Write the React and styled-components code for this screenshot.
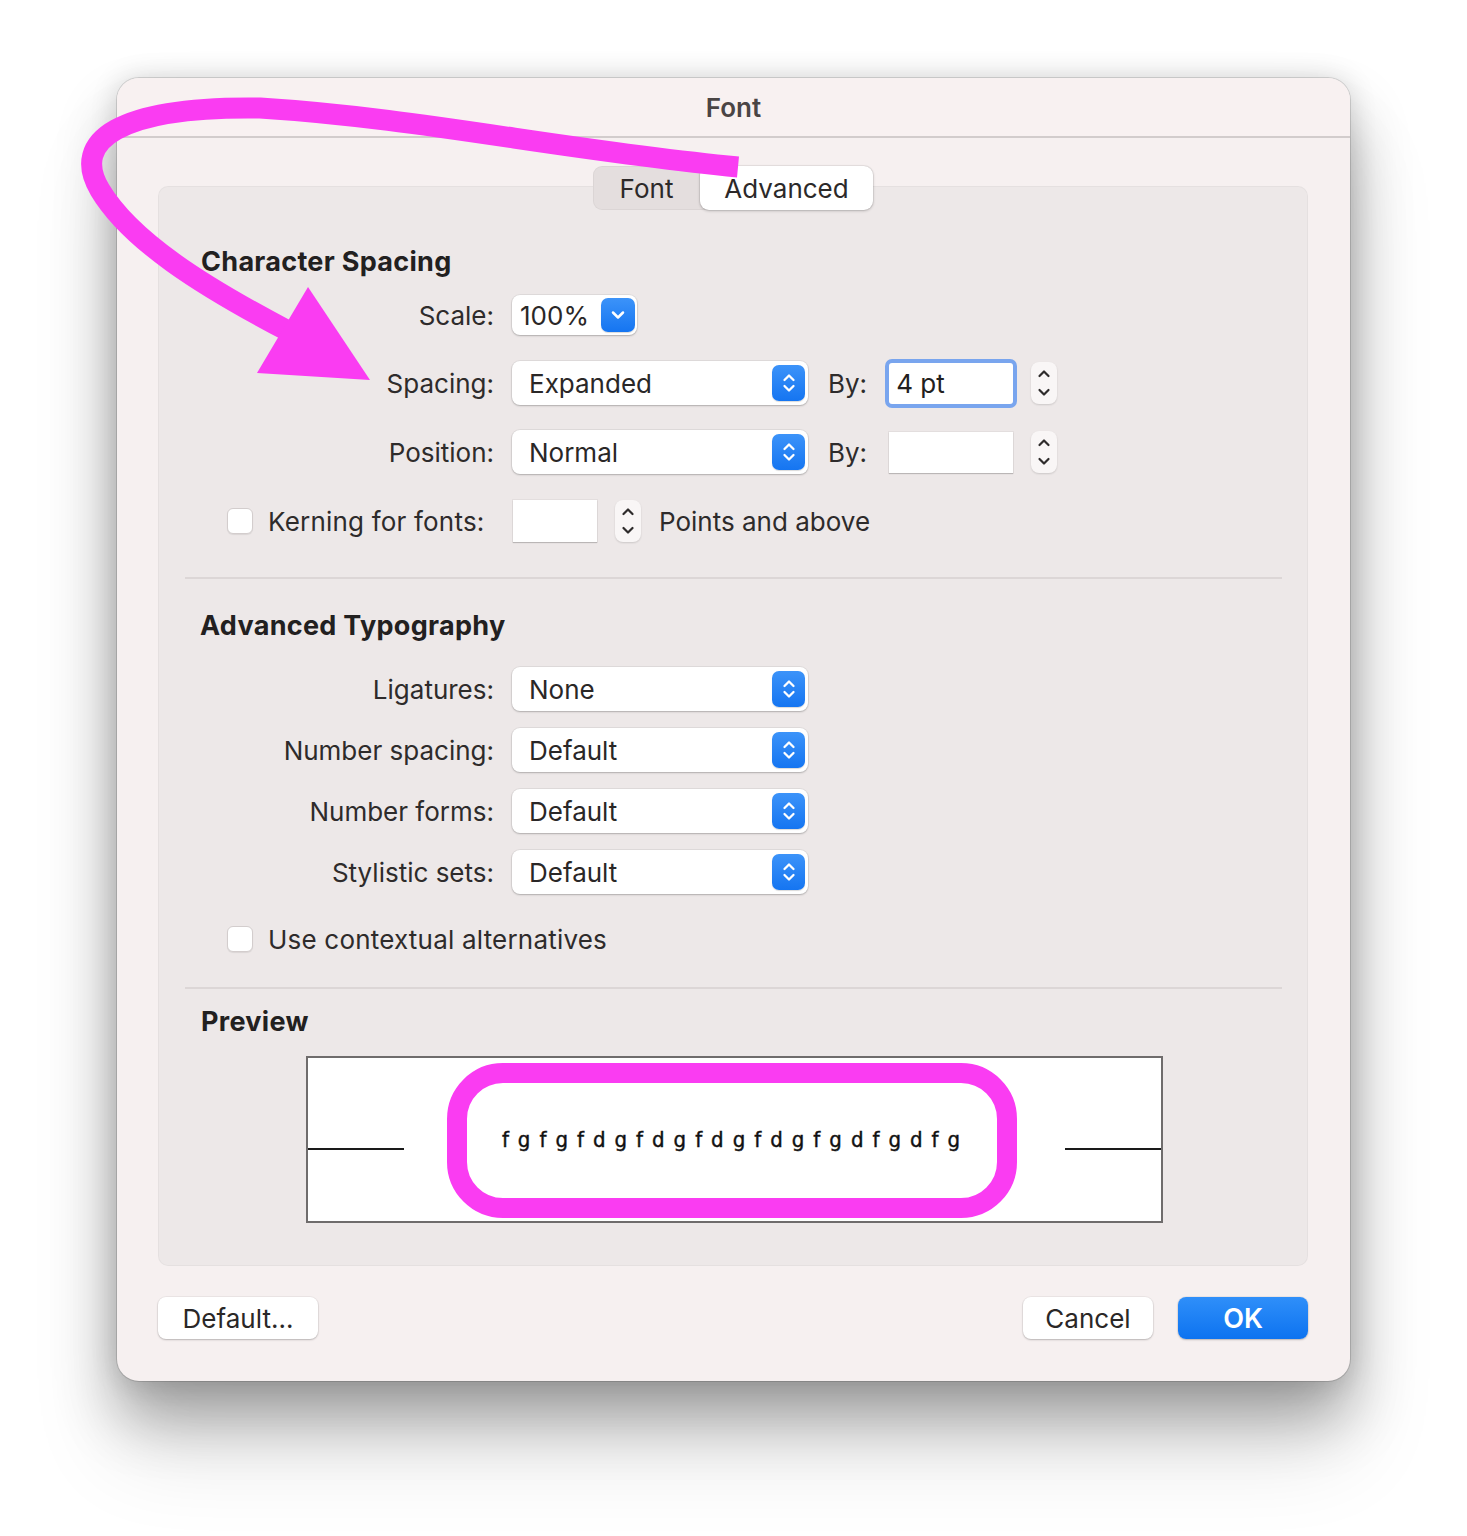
import styled, { createGlobalStyle } from "styled-components";

const MAGENTA = "#fa3cf2";

const GlobalStyle = createGlobalStyle`
  html, body {
    margin: 0;
    padding: 0;
    background: #ffffff;
  }
  body {
    font-family: Inter, "Liberation Sans", Arial, sans-serif;
    color: #2c2929;
  }
`;

const Page = styled.div`
  position: relative;
  width: 1467px;
  height: 1536px;
  box-sizing: border-box;
  padding: 78px 0 0 117px;
  background: #ffffff;
`;

const Window = styled.div`
  width: 1233px;
  height: 1303px;
  box-sizing: border-box;
  display: flex;
  flex-direction: column;
  border-radius: 22px;
  background: #f6f0f0;
  box-shadow: 0 0 0 1px rgba(0, 0, 0, 0.13), 0 0 28px rgba(0, 0, 0, 0.14),
    0 36px 60px rgba(0, 0, 0, 0.3), 0 70px 90px rgba(0, 0, 0, 0.12);
  overflow: hidden;
`;

const TitleBar = styled.div`
  flex: none;
  height: 60px;
  box-sizing: border-box;
  display: flex;
  align-items: center;
  justify-content: center;
  background: #f8f1f1;
  border-bottom: 2px solid #d2cccc;
  font-size: 26px;
  font-weight: 600;
  color: #4a4545;
`;

const Body = styled.div`
  flex: 1;
  display: flex;
  flex-direction: column;
  padding: 28px 42px 0 41px;
`;

const Tabs = styled.div`
  position: relative;
  z-index: 1;
  align-self: center;
  display: flex;
  height: 44px;
  border-radius: 9px;
  background: #e4dede;
  box-shadow: inset 0 0 0 1px rgba(0, 0, 0, 0.04);
`;

const Tab = styled.div`
  width: ${(p) => p.$w}px;
  display: flex;
  align-items: center;
  justify-content: center;
  font-size: 26px;
  color: #2c2929;
  border-radius: 9px;
  background: ${(p) => (p.$active ? "#ffffff" : "transparent")};
  box-shadow: ${(p) =>
    p.$active ? "0 1px 3px rgba(0,0,0,0.22), 0 0 0 1px rgba(0,0,0,0.05)" : "none"};
`;

const Panel = styled.div`
  margin-top: -24px;
  height: 1080px;
  box-sizing: border-box;
  display: flex;
  flex-direction: column;
  border-radius: 10px;
  background: #ede8e8;
  box-shadow: inset 0 0 0 1px rgba(0, 0, 0, 0.03);
`;

const Heading = styled.div`
  margin: ${(p) => p.$mt}px 0 0 ${(p) => p.$ml || 43}px;
  height: 30px;
  line-height: 30px;
  font-size: 27px;
  letter-spacing: 0.3px;
  font-weight: 700;
  color: #222020;
`;

const Row = styled.div`
  display: flex;
  align-items: center;
  height: ${(p) => p.$h || 48}px;
  margin-top: ${(p) => p.$mt}px;
`;

const Label = styled.div`
  width: 336px;
  flex: none;
  box-sizing: border-box;
  text-align: right;
  font-size: 26px;
  color: #2e2b2b;
  margin-right: 18px;
`;

const CheckCell = styled.div`
  width: ${(p) => (p.$auto ? "auto" : "336px")};
  flex: none;
  display: flex;
  align-items: center;
  gap: 15px;
  padding-left: 69px;
  box-sizing: border-box;
  font-size: 26px;
  letter-spacing: 0.2px;
  color: #2e2b2b;
`;

const Checkbox = styled.span`
  width: 26px;
  height: 26px;
  flex: none;
  box-sizing: border-box;
  border-radius: 6px;
  background: #ffffff;
  border: 1px solid #d3cdcd;
  box-shadow: 0 1px 1px rgba(0, 0, 0, 0.08);
`;

const Popup = styled.div`
  width: ${(p) => p.$w || 296}px;
  height: ${(p) => p.$h || 44}px;
  box-sizing: border-box;
  flex: none;
  display: flex;
  align-items: center;
  justify-content: space-between;
  padding: 0 ${(p) => p.$pr || 3}px 0 ${(p) => p.$pl || 17}px;
  background: #ffffff;
  border-radius: 8px;
  box-shadow: 0 1px 2px rgba(0, 0, 0, 0.22), 0 0 0 1px rgba(0, 0, 0, 0.05);
  font-size: 26px;
  color: #2a2727;
`;

const BlueKnob = styled.span`
  width: ${(p) => p.$w || 33}px;
  height: ${(p) => p.$h || 36}px;
  flex: none;
  display: flex;
  align-items: center;
  justify-content: center;
  border-radius: 7px;
  background: linear-gradient(#3c93f9, #1575f1);
  box-shadow: 0 1px 1px rgba(0, 0, 0, 0.15);
`;

const ByLabel = styled.span`
  margin-left: 20px;
  font-size: 26px;
  color: #2e2b2b;
`;

const TextField = styled.div`
  width: ${(p) => p.$w || 124}px;
  height: ${(p) => p.$h || 41}px;
  margin-left: ${(p) => p.$ml || 22}px;
  flex: none;
  box-sizing: border-box;
  display: flex;
  align-items: center;
  padding-left: 7px;
  background: #ffffff;
  font-size: 26px;
  color: #222020;
  border-radius: ${(p) => (p.$focus ? "3px" : "0")};
  box-shadow: ${(p) =>
    p.$focus
      ? "0 0 0 4px #79a5ee"
      : "0 1px 1px rgba(0,0,0,0.18), 0 0 0 1px rgba(0,0,0,0.04)"};
`;

const StepperBox = styled.span`
  width: 26px;
  height: 42px;
  margin-left: 18px;
  flex: none;
  display: flex;
  border-radius: 8px;
  background: #f9f6f6;
  box-shadow: 0 1px 2px rgba(0, 0, 0, 0.14);
`;

const Note = styled.span`
  margin-left: 18px;
  font-size: 26px;
  color: #2e2b2b;
`;

const Separator = styled.div`
  height: 2px;
  margin: ${(p) => p.$mt}px 26px 0 27px;
  background: #dcd6d6;
`;

const PreviewBox = styled.div`
  margin: 19px 0 0 148px;
  width: 857px;
  height: 167px;
  box-sizing: border-box;
  display: flex;
  align-items: center;
  justify-content: space-between;
  background: #ffffff;
  border: 2px solid #6f6c6c;
`;

const BaseLine = styled.span`
  width: 96px;
  height: 2px;
  margin-top: 18px;
  background: #1a1a1a;
`;

const Sample = styled.span`
  font-family: "DejaVu Sans Condensed", "DejaVu Sans", sans-serif;
  font-stretch: condensed;
  font-weight: 400;
  font-size: 22px;
  letter-spacing: 9px;
  color: #111111;
  margin-left: 2px;
  -webkit-text-stroke: 0.4px #111111;
`;

const Footer = styled.div`
  margin-top: 31px;
  display: flex;
  align-items: center;
  gap: 25px;
`;

const Button = styled.div`
  width: ${(p) => p.$w}px;
  height: 42px;
  box-sizing: border-box;
  display: flex;
  align-items: center;
  justify-content: center;
  border-radius: 8px;
  font-size: ${(p) => (p.$primary ? 27 : 26)}px;
  font-weight: ${(p) => (p.$primary ? 600 : 400)};
  color: ${(p) => (p.$primary ? "#ffffff" : "#2a2727")};
  background: ${(p) =>
    p.$primary ? "linear-gradient(#2f8ff9, #0d73f0)" : "#ffffff"};
  box-shadow: 0 1px 2px rgba(0, 0, 0, 0.22), 0 0 0 1px rgba(0, 0, 0, 0.04);
`;

const Spacer = styled.div`
  flex: 1;
`;

const Overlay = styled.svg`
  position: absolute;
  left: 0;
  top: 0;
  z-index: 10;
  pointer-events: none;
`;

function UpDown() {
  return (
    <svg width="16" height="24" viewBox="0 0 16 24">
      <path
        d="M3.5 9 L8 4.5 L12.5 9 M3.5 15 L8 19.5 L12.5 15"
        fill="none"
        stroke="#fff"
        strokeWidth="2.3"
        strokeLinecap="round"
        strokeLinejoin="round"
      />
    </svg>
  );
}

function Down() {
  return (
    <svg width="16" height="12" viewBox="0 0 16 12">
      <path
        d="M3 3.5 L8 8.5 L13 3.5"
        fill="none"
        stroke="#fff"
        strokeWidth="2.5"
        strokeLinecap="round"
        strokeLinejoin="round"
      />
    </svg>
  );
}

function Stepper() {
  return (
    <StepperBox>
      <svg width="26" height="42" viewBox="0 0 26 42">
        <path
          d="M8.5 14 L13 9.5 L17.5 14 M8.5 28 L13 32.5 L17.5 28"
          fill="none"
          stroke="#2f2c2c"
          strokeWidth="2.2"
          strokeLinecap="round"
          strokeLinejoin="round"
        />
      </svg>
    </StepperBox>
  );
}

function Select({ value }) {
  return (
    <Popup>
      <span>{value}</span>
      <BlueKnob>
        <UpDown />
      </BlueKnob>
    </Popup>
  );
}

const typography = [
  { label: "Ligatures:", value: "None", mt: 24 },
  { label: "Number spacing:", value: "Default", mt: 13 },
  { label: "Number forms:", value: "Default", mt: 13 },
  { label: "Stylistic sets:", value: "Default", mt: 13 },
];

export default function App() {
  return (
    <Page>
      <GlobalStyle />
      <Window>
        <TitleBar>Font</TitleBar>
        <Body>
          <Tabs>
            <Tab $w={107}>Font</Tab>
            <Tab $w={173} $active>
              Advanced
            </Tab>
          </Tabs>
          <Panel>
            <Heading $mt={61}>Character Spacing</Heading>

            <Row $mt={14}>
              <Label>Scale:</Label>
              <Popup $w={125} $h={40} $pl={8} $pr={2}>
                <span>100%</span>
                <BlueKnob $w={34} $h={34}>
                  <Down />
                </BlueKnob>
              </Popup>
            </Row>

            <Row $mt={20}>
              <Label>Spacing:</Label>
              <Select value="Expanded" />
              <ByLabel>By:</ByLabel>
              <TextField $focus>4 pt</TextField>
              <Stepper />
            </Row>

            <Row $mt={21}>
              <Label>Position:</Label>
              <Select value="Normal" />
              <ByLabel>By:</ByLabel>
              <TextField />
              <Stepper />
            </Row>

            <Row $mt={21}>
              <CheckCell>
                <Checkbox />
                <span>Kerning for fonts:</span>
              </CheckCell>
              <TextField $w={84} $h={42} $ml={19} />
              <Stepper />
              <Note>Points and above</Note>
            </Row>

            <Separator $mt={32} />

            <Heading $mt={32} $ml={42}>
              Advanced Typography
            </Heading>

            {typography.map((t) => (
              <Row key={t.label} $mt={t.mt}>
                <Label>{t.label}</Label>
                <Select value={t.value} />
              </Row>
            ))}

            <Row $mt={23} $h={40}>
              <CheckCell $auto>
                <Checkbox />
                <span>Use contextual alternatives</span>
              </CheckCell>
            </Row>

            <Separator $mt={28} />

            <Heading $mt={18}>Preview</Heading>

            <PreviewBox>
              <BaseLine />
              <Sample>fgfgfdgfdgfdgfdgfgdfgdfg</Sample>
              <BaseLine />
            </PreviewBox>
          </Panel>

          <Footer>
            <Button $w={160}>Default...</Button>
            <Spacer />
            <Button $w={130}>Cancel</Button>
            <Button $w={130} $primary>
              OK
            </Button>
          </Footer>
        </Body>
      </Window>

      <Overlay width="1467" height="1536" viewBox="0 0 1467 1536">
        <path
          d="M738 167 C560 150, 420 118, 260 108 C120 106, 70 140, 100 190 C130 240, 200 285, 290 332"
          fill="none"
          stroke={MAGENTA}
          strokeWidth="21"
        />
        <polygon points="308,287 257,373 370,380" fill={MAGENTA} />
        <rect
          x="457"
          y="1073"
          width="550"
          height="135"
          rx="46"
          fill="none"
          stroke={MAGENTA}
          strokeWidth="20"
        />
      </Overlay>
    </Page>
  );
}
